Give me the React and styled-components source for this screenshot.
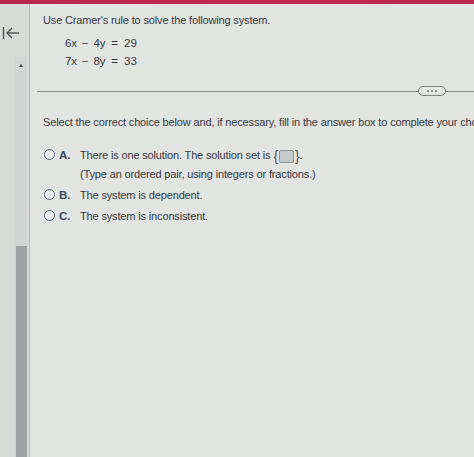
import React from 'react';
import styled, { createGlobalStyle } from 'styled-components';

const GlobalStyle = createGlobalStyle`
  html, body {
    margin: 0;
    padding: 0;
    background: #e2e4e1;
  }
  * {
    box-sizing: border-box;
  }
`;

const Page = styled.div`
  width: 474px;
  height: 457px;
  overflow: hidden;
  display: flex;
  flex-direction: column;
  font-family: "Liberation Sans", Arial, sans-serif;
  color: #36393f;
  background: #e2e4e1;
`;

const TopBar = styled.div`
  height: 4px;
  flex: none;
  background: linear-gradient(90deg, #b5264c, #c02a55 60%, #b7284f);
`;

const Body = styled.div`
  flex: 1;
  display: flex;
  min-height: 0;
`;

const Sidebar = styled.div`
  width: 30px;
  flex: none;
  display: flex;
  flex-direction: column;
  background: #d8dad8;
  border-right: 1px solid #b6b8b7;
`;

const BackButton = styled.div`
  height: 53px;
  padding: 22px 0 0 2px;
  color: #4a4c50;
`;

const ScrollTrack = styled.div`
  flex: 1;
  width: 12px;
  margin-left: 15px;
  display: flex;
  flex-direction: column;
  align-items: center;
  background: #d3d5d4;
`;

const UpArrow = styled.div`
  margin-top: 7px;
  width: 0;
  height: 0;
  border-left: 2px solid transparent;
  border-right: 2px solid transparent;
  border-bottom: 3px solid #3d3f42;
`;

const Thumb = styled.div`
  margin-top: auto;
  width: 11px;
  height: 211px;
  background: #9ea2a2;
`;

const Main = styled.div`
  flex: 1;
  min-width: 0;
  padding: 7px 0 0 7px;
`;

const BodyText = styled.p`
  margin: 0 0 0 6px;
  font-size: 11px;
  letter-spacing: -0.15px;
  line-height: 18px;
  white-space: nowrap;
`;

const Equations = styled.div`
  margin: 5px 0 0 28px;
  display: grid;
  grid-template-columns: 12px 16px 13px 17px 15px;
  grid-auto-rows: 18px;
  font-size: 11.5px;
  line-height: 18px;
  justify-items: center;
  width: max-content;
`;

const Divider = styled.div`
  margin-top: 16px;
  display: flex;
  align-items: center;
`;

const Rule = styled.div`
  flex: ${p => (p.$grow ? 1 : 'none')};
  width: ${p => (p.$grow ? 'auto' : '28px')};
  height: 1px;
  background: #8c8e8e;
`;

const MorePill = styled.div`
  width: 28px;
  height: 10px;
  border: 1.5px solid #7f8282;
  border-radius: 5px;
  display: flex;
  align-items: center;
  justify-content: center;
  gap: 2px;
  background: #e6e8e5;
`;

const Dot = styled.span`
  width: 2px;
  height: 2px;
  border-radius: 50%;
  background: #6f7272;
`;

const Instruction = styled(BodyText)`
  margin-top: 17px;
`;

const Choices = styled.div`
  margin: 15px 0 0 7px;
  display: flex;
  flex-direction: column;
  gap: 3px;
`;

const Choice = styled.div`
  display: grid;
  grid-template-columns: 15px 21px auto;
  align-items: start;
  font-size: 11px;
  letter-spacing: -0.15px;
  line-height: 18px;
`;

const Radio = styled.span`
  margin-top: 3px;
  width: 11px;
  height: 11px;
  border-radius: 50%;
  border: 1.5px solid #5a6b86;
  background: #eceeec;
`;

const Letter = styled.span`
  font-weight: bold;
  font-size: 11.5px;
  color: #3b4862;
`;

const ChoiceText = styled.div`
  white-space: nowrap;
`;

const AnswerSet = styled.span`
  display: inline-flex;
  align-items: center;
  vertical-align: middle;
  margin-left: 3px;
  font-size: 14px;
  color: #555;
`;

const AnswerBox = styled.span`
  display: inline-block;
  width: 15px;
  height: 13px;
  margin: 0 1px;
  border: 1px solid #8e9292;
  border-radius: 2px;
  background: #c6caca;
`;

function BackIcon() {
  return (
    <svg width="18" height="14" viewBox="0 0 18 14" fill="none" stroke="#45474b" strokeWidth="1.3">
      <path d="M1.5 1v12" />
      <path d="M17 7H5" />
      <path d="M10 2L5 7l5 5" />
    </svg>
  );
}

const rows = [
  ['6x', '−', '4y', '=', '29'],
  ['7x', '−', '8y', '=', '33'],
];

export default function App() {
  return (
    <>
      <GlobalStyle />
      <Page>
        <TopBar />
        <Body>
          <Sidebar>
            <BackButton><BackIcon /></BackButton>
            <ScrollTrack>
              <UpArrow />
              <Thumb />
            </ScrollTrack>
          </Sidebar>
          <Main>
            <BodyText>Use Cramer's rule to solve the following system.</BodyText>
            <Equations>
              {rows.flat().map((cell, i) => (
                <span key={i}>{cell}</span>
              ))}
            </Equations>
            <Divider>
              <Rule $grow />
              <MorePill><Dot /><Dot /><Dot /></MorePill>
              <Rule />
            </Divider>
            <Instruction>
              Select the correct choice below and, if necessary, fill in the answer box to complete your choice.
            </Instruction>
            <Choices>
              <Choice>
                <Radio />
                <Letter>A.</Letter>
                <ChoiceText>
                  There is one solution. The solution set is
                  <AnswerSet>{'{'}<AnswerBox />{'}'}</AnswerSet>.
                  <br />
                  (Type an ordered pair, using integers or fractions.)
                </ChoiceText>
              </Choice>
              <Choice>
                <Radio />
                <Letter>B.</Letter>
                <ChoiceText>The system is dependent.</ChoiceText>
              </Choice>
              <Choice>
                <Radio />
                <Letter>C.</Letter>
                <ChoiceText>The system is inconsistent.</ChoiceText>
              </Choice>
            </Choices>
          </Main>
        </Body>
      </Page>
    </>
  );
}
